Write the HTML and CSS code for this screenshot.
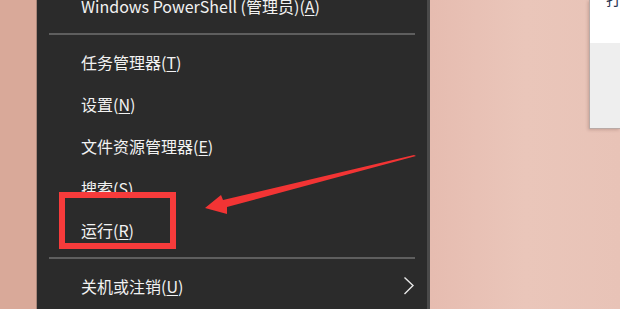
FILE: index.html
```html
<!DOCTYPE html>
<html lang="zh-CN">
<head>
<meta charset="utf-8">
<title>Win+X 菜单</title>
<link rel="stylesheet" href="styles.css">
</head>
<body>
<div class="screen">
  <div class="strip"></div>
  <div class="menu">
    <div class="list">
      <div class="item">Windows PowerShell (管理员)(<u>A</u>)</div>
      <div class="sep"></div>
      <div class="item">任务管理器(<u>T</u>)</div>
      <div class="item">设置(<u>N</u>)</div>
      <div class="item">文件资源管理器(<u>E</u>)</div>
      <div class="item">搜索(<u>S</u>)</div>
      <div class="item">运行(<u>R</u>)</div>
      <div class="sep"></div>
      <div class="item has-sub"><span class="label">关机或注销(<u>U</u>)</span>
        <svg class="chev" width="12" height="20" viewBox="0 0 12 20"><path d="M1.5 1.5 L10 9.5 L1.5 18" fill="none" stroke="#e8e8e8" stroke-width="1.4"/></svg>
      </div>
    </div>
  </div>
  <div class="desktop">
    <div class="window">
      <div class="win-top"><span class="win-text">打开</span></div>
      <div class="win-body"></div>
    </div>
  </div>
  <div class="mark-box"></div>
  <svg class="mark-arrow" width="620" height="309" viewBox="0 0 620 309">
    <polygon points="205,208 221,195 223,200 414,155 416,156 227,207 227,214" fill="#f23434"/>
  </svg>
</div>
</body>
</html>
```
FILE: styles.css
```css
* { box-sizing: border-box; }
html, body { margin: 0; padding: 0; }
body {
  width: 620px;
  height: 309px;
  overflow: hidden;
  font-family: "Noto Sans CJK SC", "Noto Sans", sans-serif;
}
.screen {
  position: relative;
  display: flex;
  width: 620px;
  height: 309px;
  overflow: hidden;
}
.strip {
  width: 37px;
  background: #d9a999;
  border-right: 1px solid #a88578;
}
.menu {
  width: 393px;
  background: #2b2b2b;
  border-right: 3px solid #4a4a4a;
  overflow: hidden;
}
.list {
  margin-top: -15px;
}
.item {
  height: 42px;
  display: flex;
  align-items: center;
  padding-left: 44px;
  padding-right: 12px;
  color: #f2f2f2;
  font-size: 16px;
  white-space: nowrap;
}
.item u {
  text-decoration-thickness: 1px;
  text-underline-offset: 2px;
}
.has-sub { justify-content: space-between; }
.chev { display: block; }
.sep {
  height: 2px;
  margin: 6px 12px 6px 12px;
  background: #5e5e5e;
}
.desktop {
  flex: 1;
  display: flex;
  justify-content: flex-end;
  align-items: flex-start;
  background: linear-gradient(90deg, #e6bcb0 0%, #eac6ba 50%, #e8c3b7 100%);
}
.window {
  width: 31px;
  height: 129px;
  border-left: 1px solid #b9aaa6;
  border-bottom: 1px solid #b9aaa6;
  display: flex;
  flex-direction: column;
  box-shadow: -1px 1px 3px rgba(120, 80, 70, 0.3);
}
.win-top {
  height: 43px;
  background: #ffffff;
  overflow: hidden;
  position: relative;
}
.win-text {
  position: absolute;
  left: 16px;
  top: -12px;
  font-size: 15px;
  color: #2a3550;
  white-space: nowrap;
}
.win-body {
  flex: 1;
  background: #eeeeee;
}
.mark-box {
  position: absolute;
  left: 59px;
  top: 192px;
  width: 117px;
  height: 57px;
  border: 6px solid #f73b3b;
}
.mark-arrow {
  position: absolute;
  left: 0;
  top: 0;
}
```
